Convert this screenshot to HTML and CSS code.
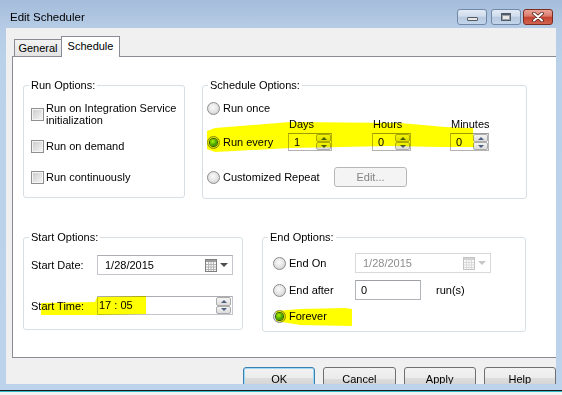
FILE: index.html
```html
<!DOCTYPE html>
<html lang="en">
<head>
    <meta charset="UTF-8">
    <meta name="viewport" content="width=device-width, initial-scale=1.0">
    <title>Edit Scheduler</title>
    <link rel="stylesheet" href="styles.css">
</head>
<body>
    <div class="window">
        <div class="titlebar">
            <div class="title">Edit Scheduler</div>
            <div class="caption">
                <span class="cbtn min"><i></i></span>
                <span class="cbtn max"><i></i></span>
                <span class="cbtn close">
                    <svg width="12" height="10" viewBox="0 0 12 10"><path d="M2 1.5 L10 8.5 M10 1.5 L2 8.5" stroke="#4e231c" stroke-width="3.6" stroke-linecap="round"/><path d="M2 1.5 L10 8.5 M10 1.5 L2 8.5" stroke="#fff" stroke-width="2" stroke-linecap="round"/></svg>
                </span>
            </div>
        </div>

        <div class="client">
            <div class="tabs">
                <span class="tab general">General</span>
                <span class="tab active">Schedule</span>
            </div>

            <div class="page">
                <div class="row row-top">
                    <fieldset class="group run-opts">
                        <legend>Run Options:</legend>
                        <div class="check first"><span class="box"></span><span>Run on Integration Service<br>initialization</span></div>
                        <div class="check second"><span class="box"></span><span>Run on demand</span></div>
                        <div class="check third"><span class="box"></span><span>Run continuously</span></div>
                    </fieldset>

                    <fieldset class="group sched-opts">
                        <legend>Schedule Options:</legend>
                        <div class="opt once"><span class="radio"></span>Run once</div>
                        <div class="every-row">
                            <div class="opt every"><span class="radio on"></span>Run every</div>
                            <div class="spin-col days">
                                <div class="spin-label">Days</div>
                                <div class="spin"><span class="val">1</span><span class="updown"><i class="up"></i><i class="down"></i></span></div>
                            </div>
                            <div class="spin-col hours">
                                <div class="spin-label">Hours</div>
                                <div class="spin"><span class="val">0</span><span class="updown"><i class="up"></i><i class="down"></i></span></div>
                            </div>
                            <div class="spin-col minutes">
                                <div class="spin-label">Minutes</div>
                                <div class="spin"><span class="val">0</span><span class="updown"><i class="up"></i><i class="down"></i></span></div>
                            </div>
                        </div>
                        <div class="custom-row">
                            <div class="opt custom"><span class="radio"></span>Customized Repeat</div>
                            <button class="btn edit" disabled>Edit...</button>
                        </div>
                    </fieldset>
                </div>

                <div class="row row-bottom">
                    <fieldset class="group start-opts">
                        <legend>Start Options:</legend>
                        <div class="field date-field">
                            <span class="field-label">Start Date:</span>
                            <div class="date">
                                <span>1/28/2015</span>
                                <svg class="cal" width="12" height="13" viewBox="0 0 12 13"><rect x="0.5" y="0.5" width="11" height="12" fill="#f6f6f6" stroke="#7f7f7f"/><rect x="1" y="1" width="10" height="2" fill="#9c9c9c"/><path d="M1 5.5h10M1 8h10M1 10.5h10M3.5 3v9M6 3v9M8.5 3v9" stroke="#b4b4b4"/></svg>
                                <span class="drop"></span>
                            </div>
                        </div>
                        <div class="field time-field">
                            <span class="field-label">Start Time:</span>
                            <div class="time">
                                <span class="val">17 : 05</span>
                                <span class="updown"><i class="up"></i><i class="down"></i></span>
                            </div>
                        </div>
                    </fieldset>

                    <fieldset class="group end-opts">
                        <legend>End Options:</legend>
                        <div class="end-row end-on">
                            <div class="opt"><span class="radio"></span>End On</div>
                            <div class="date disabled">
                                <span>1/28/2015</span>
                                <svg class="cal" width="12" height="13" viewBox="0 0 12 13"><rect x="0.5" y="0.5" width="11" height="12" fill="#fafafa" stroke="#c4c4c4"/><rect x="1" y="1" width="10" height="2" fill="#d2d2d2"/><path d="M1 5.5h10M1 8h10M1 10.5h10M3.5 3v9M6 3v9M8.5 3v9" stroke="#dadada"/></svg>
                                <span class="drop"></span>
                            </div>
                        </div>
                        <div class="end-row end-after">
                            <div class="opt"><span class="radio"></span>End after</div>
                            <div class="textbox">0</div>
                            <span class="runs">run(s)</span>
                        </div>
                        <div class="end-row forever">
                            <div class="opt"><span class="radio on"></span>Forever</div>
                        </div>
                    </fieldset>
                </div>
            </div>

            <div class="buttons">
                <button class="btn default">OK</button>
                <button class="btn">Cancel</button>
                <button class="btn">Apply</button>
                <button class="btn">Help</button>
            </div>
        </div>
    </div>
    <div class="taskbar"></div>

    <!-- marker strokes drawn over the screenshot -->
    <svg class="marker" width="562" height="395" viewBox="0 0 562 395">
        <polygon points="207,131 215,128 290,122 400,123 445,127 473,128 474,147 440,147 390,146 290,148 215,152 207,149"/>
        <polygon points="41,303 95,302 97,297 146,296 146,314 100,315 41,315"/>
        <polygon points="276,311 300,309 345,308 352,309 352,326 300,325 276,321"/>
    </svg>
</body>
</html>
```

FILE: styles.css
```css
* {
    box-sizing: border-box;
}

body {
    margin: 0;
    width: 562px;
    height: 395px;
    overflow: hidden;
    position: relative;
    background-color: #b9d1ea;
    font-family: "Liberation Sans", Arial, sans-serif;
    font-size: 11px;
    color: #000;
}

.window {
    height: 390px;
    padding: 0 6px;
    background: linear-gradient(to bottom, #a5bddb 0, #b6cce6 28px, #bad1ea 60px, #bcd3eb 100%);
}

/* title bar */
.titlebar {
    height: 28px;
    display: flex;
    justify-content: space-between;
    padding: 0 3px 0 4px;
}

.title {
    padding-top: 10px;
    line-height: 15px;
    font-size: 11.5px;
    color: #000;
}

.caption {
    display: flex;
    padding-top: 9px;
}

.cbtn {
    width: 30px;
    height: 16px;
    border: 1px solid #7188a6;
    border-radius: 3px;
    display: flex;
    align-items: center;
    justify-content: center;
    background: linear-gradient(to bottom, #e3ebf5 0, #cfdcec 45%, #b7c9df 50%, #c3d5ea 100%);
}

.cbtn.min {
    margin-right: 4px;
}

.cbtn.max {
    margin-right: 2px;
}

.cbtn.min i {
    width: 11px;
    height: 4px;
    margin-top: 4px;
    border: 1px solid #535b66;
    border-radius: 1px;
    background: #e8e8e8;
}

.cbtn.max i {
    width: 10px;
    height: 8px;
    border: 1px solid #535b66;
    border-top-width: 2px;
    background: #e8e8e8;
    box-shadow: inset 0 0 0 1px #9aa3ad;
}

.cbtn.close {
    border-color: #7c2d23;
    background: linear-gradient(to bottom, #eaa597 0, #d97a6b 45%, #c4412f 50%, #d0634f 100%);
}

/* client area */
.client {
    height: 356px;
    background-color: #f0f0f0;
    overflow: hidden;
}

.tabs {
    height: 29px;
    padding: 8px 0 0 8px;
    display: flex;
    align-items: flex-end;
    margin-bottom: -1px;
    position: relative;
    z-index: 1;
}

.tab {
    border: 1px solid #898c95;
    border-bottom: none;
    text-align: center;
}

.tab.general {
    width: 48px;
    height: 17px;
    margin-bottom: 1px;
    padding-top: 2px;
    background: linear-gradient(to bottom, #f2f2f2, #e3e3e3);
}

.tab.active {
    width: 59px;
    height: 21px;
    margin-left: -1px;
    padding-top: 3px;
    background-color: #fff;
}

.page {
    margin-left: 6px;
    width: 550px;
    height: 302px;
    border: 1px solid #898c95;
    background-color: #fff;
    padding: 21px 0 0 10px;
}

.row {
    display: flex;
    align-items: flex-start;
}

.row-bottom {
    margin-top: 31px;
}

/* group boxes */
.group {
    margin: 0;
    padding: 0;
    min-width: 0;
    border: 1px solid #d5dfe5;
    border-radius: 3px;
}

.group legend {
    padding: 0 2px;
    line-height: 14px;
}

.run-opts {
    width: 162px;
    height: 120px;
    margin-right: 17px;
    padding: 9px 0 0 7px;
}

.run-opts legend {
    margin-left: -2px;
}

.sched-opts {
    width: 325px;
    height: 121px;
    padding: 7px 0 0 4px;
}

.sched-opts legend {
    margin-left: 1px;
}

.start-opts {
    width: 220px;
    height: 100px;
    margin-right: 19px;
    padding: 11px 0 0 7px;
}

.start-opts legend {
    margin-left: -2px;
}

.end-opts {
    width: 264px;
    height: 102px;
    padding: 9px 0 0 10px;
}

.end-opts legend {
    margin-left: -5px;
}

/* checkboxes */
.check {
    display: flex;
    align-items: center;
    gap: 2px;
    line-height: 12px;
}

.check.first {
    height: 26px;
}

.check.second {
    height: 38px;
}

.check.third {
    height: 24px;
}

.box {
    flex: none;
    width: 13px;
    height: 13px;
    border: 1px solid #8e8f8f;
    background: linear-gradient(135deg, #c9c9c9, #f8f8f8);
    box-shadow: inset 0 0 0 1px #f5f5f5;
}

/* radios */
.opt {
    display: flex;
    align-items: center;
    gap: 3px;
    height: 18px;
}

.radio {
    flex: none;
    width: 13px;
    height: 13px;
    border-radius: 50%;
    border: 1px solid #8a8b8b;
    background: radial-gradient(circle at 45% 40%, #fbfbfb 0, #e2e2e2 55%, #c6c6c6 100%);
    display: flex;
    align-items: center;
    justify-content: center;
}

.radio.on::after {
    content: "";
    width: 7px;
    height: 7px;
    border-radius: 50%;
    background: radial-gradient(circle at 40% 35%, #b6f58a 0, #4cae22 50%, #1d6a0c 100%);
    box-shadow: 0 0 0 1px #2d5a1c;
}

.every-row {
    display: flex;
    align-items: flex-end;
}

.opt.every {
    width: 81px;
}

.spin-col.days {
    width: 44px;
    margin-right: 40px;
}

.spin-col.hours {
    width: 39px;
    margin-right: 39px;
}

.spin-col.minutes {
    width: 39px;
}

.spin-label {
    line-height: 14px;
    margin-bottom: 2px;
    padding-left: 1px;
}

.spin {
    display: flex;
    height: 18px;
    border: 1px solid #b3b3b3;
    border-top-color: #9c9c9c;
    background-color: #fff;
}

.val {
    flex: 1;
    padding-left: 5px;
    line-height: 16px;
}

.updown {
    width: 15px;
    display: flex;
    flex-direction: column;
}

.updown i {
    flex: 1;
    display: flex;
    align-items: center;
    justify-content: center;
    border: 1px solid #acacac;
    border-radius: 2px;
    background: linear-gradient(to bottom, #f4f4f4, #dcdcdc);
}

.updown i::after {
    content: "";
    border-left: 3px solid transparent;
    border-right: 3px solid transparent;
}

.updown .up::after {
    border-bottom: 3px solid #4c5f80;
}

.updown .down::after {
    border-top: 3px solid #4c5f80;
}

.custom-row {
    display: flex;
    align-items: center;
    margin-top: 16px;
}

.opt.custom {
    width: 127px;
}

/* buttons */
.btn {
    width: 73px;
    height: 23px;
    padding: 0;
    border: 1px solid #707070;
    border-radius: 3px;
    font-family: inherit;
    font-size: 11px;
    color: #000;
    background: linear-gradient(to bottom, #f2f2f2 0, #ebebeb 50%, #dddddd 50%, #cfcfcf 100%);
}

.btn.default {
    border-color: #3c7fb1;
    box-shadow: inset 0 0 0 1px #9fd8f5;
}

.btn.edit {
    height: 20px;
    border-color: #b5b8ba;
    background: #f4f4f4;
    color: #838383;
}

.buttons {
    display: flex;
    gap: 8px;
    padding-left: 237px;
    margin-top: 9px;
}

/* start / end fields */
.field {
    display: flex;
    align-items: center;
}

.field-label {
    width: 66px;
}

.time-field {
    margin-top: 21px;
}

.date {
    display: flex;
    align-items: center;
    width: 136px;
    height: 20px;
    padding: 0 4px 0 7px;
    border: 1px solid #c2c5cb;
    border-top-color: #abadb3;
    background-color: #fff;
}

.date .cal {
    margin-left: auto;
}

.drop {
    margin-left: 3px;
    border-left: 4px solid transparent;
    border-right: 4px solid transparent;
    border-top: 4px solid #4d4d4d;
}

.date.disabled {
    border-color: #d9d9d9;
    color: #8d8d8d;
}

.date.disabled .drop {
    border-top-color: #c8c8c8;
}

.time {
    display: flex;
    width: 136px;
    height: 19px;
    padding-right: 1px;
    border: 1px solid #c2c5cb;
    border-top-color: #abadb3;
}

.time .val {
    padding-left: 1px;
    line-height: 17px;
}

.end-row {
    display: flex;
    align-items: center;
    height: 20px;
}

.end-row + .end-row {
    margin-top: 7px;
}

.end-row .opt {
    width: 82px;
}

.end-row.forever {
    height: 18px;
}

.textbox {
    width: 66px;
    height: 20px;
    padding-left: 5px;
    line-height: 18px;
    border: 1px solid #b0b3b8;
    border-top-color: #9ea1a6;
}

.runs {
    margin-left: 15px;
}

.taskbar {
    height: 5px;
    border-top: 1px solid #1a1a1a;
    border-bottom: 3px solid #f2f2f2;
    background-color: #33b9c6;
}

.marker {
    position: absolute;
    top: 0;
    left: 0;
    pointer-events: none;
    mix-blend-mode: multiply;
    fill: #ffff00;
}
```
